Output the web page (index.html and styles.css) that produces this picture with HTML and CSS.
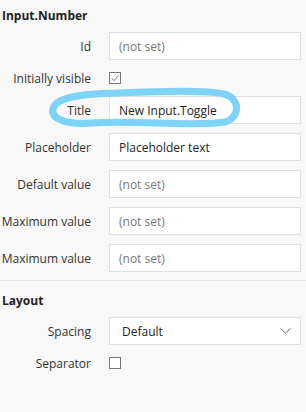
FILE: index.html
```html
<!DOCTYPE html>
<html>
<head>
<meta charset="utf-8">
<link rel="stylesheet" href="styles.css">
</head>
<body>
<div class="panel">
  <div class="heading">Input.Number</div>
  <div class="grid">
    <div class="label">Id</div>
    <div class="field empty">(not set)</div>
    <div class="label">Initially visible</div>
    <div class="checkrow">
      <span class="checkbox">
        <svg width="12" height="12" viewBox="0 0 12 12"><path d="M2.5 6.2 L5 8.6 L9.6 3.4" fill="none" stroke="#777" stroke-width="1"/></svg>
      </span>
    </div>
    <div class="label">Title</div>
    <div class="field">New Input.Toggle</div>
    <div class="label">Placeholder</div>
    <div class="field">Placeholder text</div>
    <div class="label">Default value</div>
    <div class="field empty">(not set)</div>
    <div class="label">Maximum value</div>
    <div class="field empty">(not set)</div>
    <div class="label">Maximum value</div>
    <div class="field empty">(not set)</div>
  </div>
  <div class="divider"></div>
  <div class="heading heading-2">Layout</div>
  <div class="grid">
    <div class="label">Spacing</div>
    <div class="field select">
      <span>Default</span>
      <svg class="chev" width="11" height="6" viewBox="0 0 11 6"><path d="M0.5 0.5 L5.5 5.2 L10.5 0.5" fill="none" stroke="#666" stroke-width="1"/></svg>
    </div>
    <div class="label">Separator</div>
    <div class="checkrow"><span class="checkbox"></span></div>
  </div>
  <svg class="scribble" width="306" height="412" viewBox="0 0 306 412">
    <path d="M118 93 C160 91, 208 90, 224 94 C240 98, 241 117, 225 122 C195 127, 135 120, 92 123 C70 125, 50 120, 53 109 C55 99, 72 94, 118 93" fill="none" stroke="#7dd3f8" stroke-width="7" stroke-linecap="round" stroke-linejoin="round"/>
  </svg>
</div>
</body>
</html>
```
FILE: styles.css
```css
html, body {
  margin: 0;
  padding: 0;
  background: #f8f8f8;
}
body {
  font-family: "Open Sans", "Noto Sans", sans-serif;
  font-size: 12px;
  color: #333;
}
.panel {
  position: relative;
  width: 306px;
  height: 412px;
  padding-top: 6px;
  box-sizing: border-box;
}
.heading {
  font-weight: 700;
  font-size: 12px;
  line-height: 20px;
  height: 20px;
  padding-left: 2px;
  color: #222;
}
.heading-2 {
  margin-top: 10px;
}
.grid {
  margin-top: 6px;
  display: grid;
  grid-template-columns: 91px 1fr;
  column-gap: 18px;
  row-gap: 9px;
  padding-right: 5px;
}
.label {
  text-align: right;
  display: flex;
  align-items: center;
  justify-content: flex-end;
  white-space: nowrap;
  color: #333;
}
.field {
  height: 28px;
  box-sizing: border-box;
  background: #fff;
  border: 1px solid #e1e1e1;
  padding-left: 9px;
  display: flex;
  align-items: center;
  color: #222;
}
.field.empty {
  color: #777;
}
.select {
  padding-left: 12px;
  padding-right: 9px;
  justify-content: space-between;
}
.chev {
  display: block;
}
.checkrow {
  height: 18px;
  display: flex;
  align-items: center;
}
.checkbox {
  width: 12px;
  height: 12px;
  box-sizing: border-box;
  border: 1px solid #777;
  background: #fff;
  display: flex;
  align-items: center;
  justify-content: center;
}
.checkbox svg {
  display: block;
  margin: -1px;
}
.divider {
  margin-top: 8px;
  height: 1px;
  background: #e6e6e6;
}
.scribble {
  position: absolute;
  left: 0;
  top: 0;
  pointer-events: none;
}
```
